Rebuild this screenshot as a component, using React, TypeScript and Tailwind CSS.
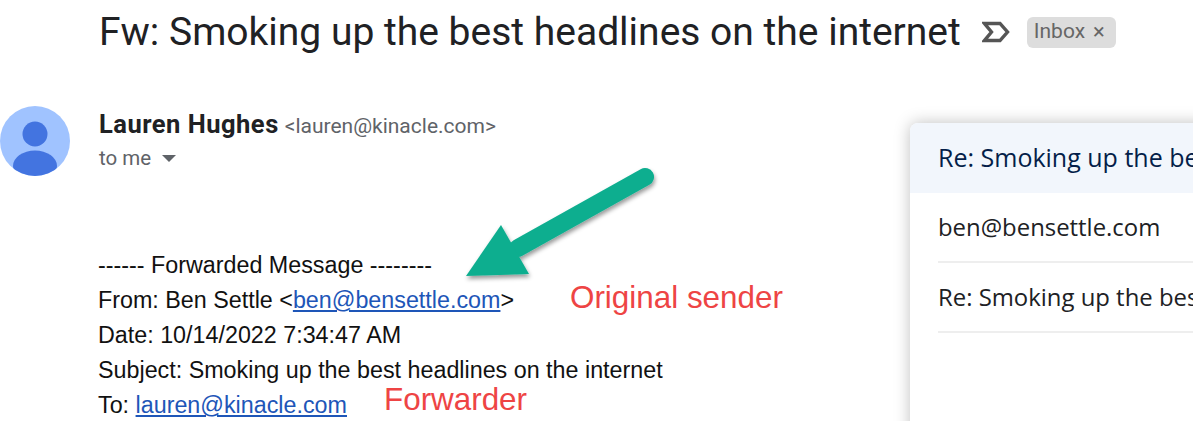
import React from "react";

function Avatar() {
  return (
    <svg width="70" height="70" viewBox="0 0 70 70" className="shrink-0">
      <defs>
        <clipPath id="av">
          <circle cx="35" cy="35" r="35" />
        </clipPath>
      </defs>
      <circle cx="35" cy="35" r="35" fill="#a0c3ff" />
      <g clipPath="url(#av)" fill="#4374e0">
        <circle cx="35" cy="28" r="12.5" />
        <ellipse cx="35" cy="60" rx="22" ry="15.5" />
      </g>
    </svg>
  );
}

function Arrow() {
  return (
    <svg width="210" height="130" viewBox="0 0 210 130" className="absolute left-[450px] top-[160px]">
      <defs>
        <filter id="sh" x="-20%" y="-20%" width="140%" height="140%">
          <feDropShadow dx="1" dy="3" stdDeviation="2" floodColor="#000" floodOpacity="0.4" />
        </filter>
      </defs>
      <g filter="url(#sh)" fill="#0fae8f">
        <path d="M195 17 L68 88" stroke="#0fae8f" strokeWidth="18" strokeLinecap="round" fill="none" />
        <path d="M16 116 L51 65 L79 114 Z" />
      </g>
    </svg>
  );
}

export default function App() {
  return (
    <div className="relative h-[421px] w-[1193px] overflow-hidden bg-white">
      <div className="flex h-[66px] items-center pl-[99px] pb-[2px]">
        <h1 className="whitespace-nowrap font-['Roboto',sans-serif] text-[39px] text-[#202124]">
          Fw: Smoking up the best headlines on the internet
        </h1>
        <svg width="28" height="22" viewBox="0 0 28 22" className="ml-[21px]" fill="none">
          <path d="M2.5 2.5 H18 L25.5 11 L18 19.5 H2.5 L9.5 11 Z" stroke="#555" strokeWidth="3.4" />
        </svg>
        <div className="ml-[17px] flex h-[31px] w-[89px] shrink-0 items-center rounded-[6px] bg-[#dddddd] pl-[7px] font-['Roboto',sans-serif] text-[21px] text-[#666666]">
          Inbox
          <span className="ml-[8px] text-[22px] leading-none">×</span>
        </div>
      </div>

      <div className="mt-[40px] flex">
        <Avatar />
        <div className="ml-[29px] flex-1">
          <div className="flex items-baseline pt-[3px] font-['Roboto',sans-serif]">
            <span className="text-[25.5px] font-bold leading-[30px] tracking-[0.5px] text-[#202124]">Lauren Hughes</span>
            <span className="ml-[6px] text-[21px] text-[#5f6368]">&lt;lauren@kinacle.com&gt;</span>
          </div>
          <div className="flex items-center font-['Roboto',sans-serif] text-[20.5px] text-[#5f6368]">
            to me
            <span className="ml-[11px] mt-[2px] h-0 w-0 border-x-[7px] border-t-[7px] border-x-transparent border-t-[#5f6368]" />
          </div>
          <div className="-ml-[1px] mt-[75px] font-['Liberation_Sans',sans-serif] text-[23.3px] leading-[35px] text-[#111111]">
            <div>------ Forwarded Message --------</div>
            <div>
              From: Ben Settle &lt;<a className="text-[#1e56b8] underline">ben@bensettle.com</a>&gt;
            </div>
            <div>Date: 10/14/2022 7:34:47 AM</div>
            <div>Subject: Smoking up the best headlines on the internet</div>
            <div>
              To: <a className="text-[#1e56b8] underline">lauren@kinacle.com</a>
            </div>
          </div>
        </div>
      </div>

      <Arrow />
      <span className="absolute left-[570px] top-[280px] font-['Liberation_Sans',sans-serif] text-[31.4px] leading-[36px] text-[#ee4444]">
        Original sender
      </span>
      <span className="absolute left-[384px] top-[382px] font-['Liberation_Sans',sans-serif] text-[31.4px] leading-[36px] text-[#ee4444]">
        Forwarder
      </span>

      <div className="absolute left-[910px] top-[123px] h-[320px] w-[320px] overflow-hidden rounded-t-[8px] bg-white shadow-[0_0_16px_rgba(0,0,0,0.25)]">
        <div className="flex h-[70px] items-center bg-[#f2f6fc] pl-[28px] font-['Open_Sans',sans-serif] text-[25px] font-medium text-[#041e49]">
          <span className="whitespace-nowrap">Re: Smoking up the best headlines</span>
        </div>
        <div className="pl-[28px] pr-[29px] font-['Open_Sans',sans-serif] text-[23.9px] text-[#202124]">
          <div className="flex h-[70px] items-center border-b-2 border-[#eeeeee] whitespace-nowrap">ben@bensettle.com</div>
          <div className="flex h-[70px] items-center border-b-2 border-[#eeeeee] whitespace-nowrap">Re: Smoking up the best headlines</div>
        </div>
      </div>
    </div>
  );
}
